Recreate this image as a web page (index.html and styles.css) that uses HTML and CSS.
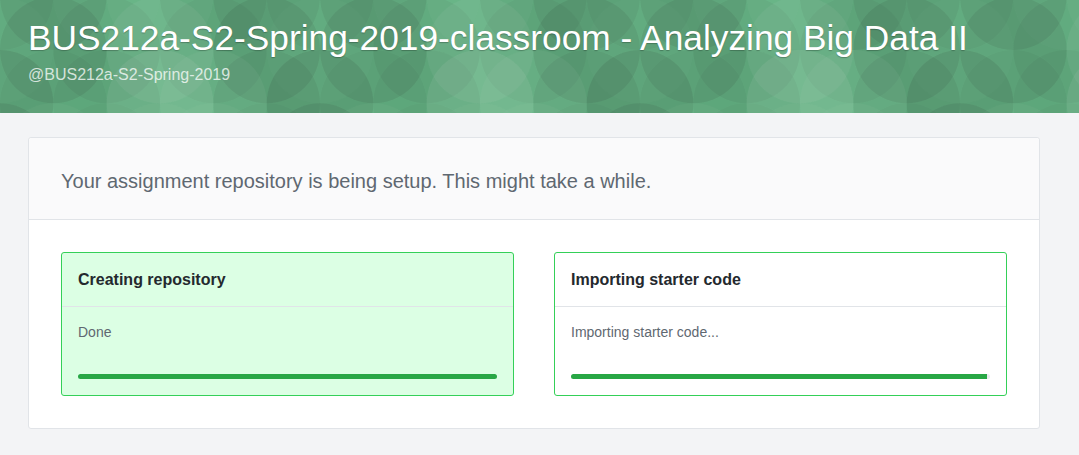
FILE: index.html
```html
<!DOCTYPE html>
<html lang="en">
<head>
<meta charset="utf-8">
<title>Assignment setup</title>
<link rel="stylesheet" href="styles.css">
</head>
<body>
<header class="banner">
  <h1 class="banner-title">BUS212a-S2-Spring-2019-classroom - Analyzing Big Data II</h1>
  <p class="banner-sub">@BUS212a-S2-Spring-2019</p>
</header>
<main class="page">
  <section class="box">
    <div class="box-head">Your assignment repository is being setup. This might take a while.</div>
    <div class="box-body">
      <article class="step step-done">
        <h2 class="step-title">Creating repository</h2>
        <div class="step-body">
          <p class="step-text">Done</p>
          <div class="bar"><div class="bar-fill bar-full"></div></div>
        </div>
      </article>
      <article class="step">
        <h2 class="step-title">Importing starter code</h2>
        <div class="step-body">
          <p class="step-text">Importing starter code...</p>
          <div class="bar"><div class="bar-fill bar-most"></div></div>
        </div>
      </article>
    </div>
  </section>
</main>
</body>
</html>
```
FILE: styles.css
```css
* { box-sizing: border-box; }
html, body { margin: 0; padding: 0; }
body {
  background: #f3f4f6;
  font-family: "Liberation Sans", Arial, sans-serif;
  color: #24292e;
  height: 455px;
  overflow: hidden;
}
.banner {
  height: 113px;
  padding: 15px 28px 0;
  background-color: #63b383;
  background-size: 320px 320px;
  background-image: url("data:image/svg+xml,%3Csvg xmlns='http://www.w3.org/2000/svg' width='320' height='320'%3E%3Cg fill='%23222'%3E%3Ccircle cx='53.33' cy='-3.33' r='53.33' fill-opacity='.09'/%3E%3Ccircle cx='373.33' cy='-3.33' r='53.33' fill-opacity='.09'/%3E%3Ccircle cx='266.67' cy='-3.33' r='53.33' fill-opacity='.08'/%3E%3Ccircle cx='-53.33' cy='-3.33' r='53.33' fill-opacity='.08'/%3E%3Ccircle cx='213.33' cy='-3.33' r='53.33' fill-opacity='.06'/%3E%3Ccircle cx='0' cy='-3.33' r='53.33' fill-opacity='.05'/%3E%3Ccircle cx='320' cy='-3.33' r='53.33' fill-opacity='.05'/%3E%3Ccircle cx='106.67' cy='50' r='53.33' fill-opacity='.06'/%3E%3Ccircle cx='53.33' cy='50' r='53.33' fill-opacity='.09'/%3E%3Ccircle cx='373.33' cy='50' r='53.33' fill-opacity='.09'/%3E%3Ccircle cx='213.33' cy='50' r='53.33' fill-opacity='.05'/%3E%3Ccircle cx='266.67' cy='50' r='53.33' fill-opacity='.09'/%3E%3Ccircle cx='-53.33' cy='50' r='53.33' fill-opacity='.09'/%3E%3Ccircle cx='0' cy='103.33' r='53.33' fill-opacity='.1'/%3E%3Ccircle cx='320' cy='103.33' r='53.33' fill-opacity='.1'/%3E%3Ccircle cx='53.33' cy='103.33' r='53.33' fill-opacity='.04'/%3E%3Ccircle cx='373.33' cy='103.33' r='53.33' fill-opacity='.04'/%3E%3Ccircle cx='106.67' cy='103.33' r='53.33' fill-opacity='.05'/%3E%3Ccircle cx='266.67' cy='103.33' r='53.33' fill-opacity='.07'/%3E%3Ccircle cx='-53.33' cy='103.33' r='53.33' fill-opacity='.07'/%3E%3Ccircle cx='0' cy='156.67' r='53.33' fill-opacity='.09'/%3E%3Ccircle cx='320' cy='156.67' r='53.33' fill-opacity='.09'/%3E%3Ccircle cx='106.67' cy='156.67' r='53.33' fill-opacity='.03'/%3E%3Ccircle cx='266.67' cy='156.67' r='53.33' fill-opacity='.03'/%3E%3Ccircle cx='-53.33' cy='156.67' r='53.33' fill-opacity='.03'/%3E%3C/g%3E%3Cg fill='%23ddd'%3E%3Ccircle cx='106.67' cy='-3.33' r='53.33' fill-opacity='.02'/%3E%3Ccircle cx='160' cy='-3.33' r='53.33' fill-opacity='.03'/%3E%3Ccircle cx='0' cy='50' r='53.33' fill-opacity='.02'/%3E%3Ccircle cx='320' cy='50' r='53.33' fill-opacity='.02'/%3E%3Ccircle cx='160' cy='50' r='53.33' fill-opacity='.07'/%3E%3Ccircle cx='160' cy='103.33' r='53.33' fill-opacity='.09'/%3E%3Ccircle cx='213.33' cy='103.33' r='53.33' fill-opacity='.05'/%3E%3Ccircle cx='53.33' cy='156.67' r='53.33' fill-opacity='.03'/%3E%3Ccircle cx='373.33' cy='156.67' r='53.33' fill-opacity='.03'/%3E%3Ccircle cx='160' cy='156.67' r='53.33' fill-opacity='.03'/%3E%3Ccircle cx='213.33' cy='156.67' r='53.33' fill-opacity='.03'/%3E%3C/g%3E%3C/svg%3E");
}
.banner-title {
  margin: 0;
  font-size: 35.3px;
  font-weight: 400;
  line-height: 45px;
  color: #fff;
  text-shadow: 0 1px 1px rgba(0, 0, 0, 0.25);
}
.banner-sub {
  margin: 4px 0 0;
  font-size: 16px;
  line-height: 21px;
  color: rgba(255, 255, 255, 0.75);
}
.page { padding: 24px 39px 0 28px; }
.box {
  background: #fff;
  border: 1px solid #e1e4e8;
  border-radius: 3px;
}
.box-head {
  padding: 30px 32px 24px;
  font-size: 20px;
  line-height: 27px;
  color: #5f6871;
  background: #fafafb;
  border-bottom: 1px solid #e1e4e8;
  border-radius: 3px 3px 0 0;
}
.box-body {
  display: grid;
  grid-template-columns: 1fr 1fr;
  gap: 40px;
  padding: 32px;
}
.step {
  border: 1px solid #34d058;
  border-radius: 3px;
  background: #fff;
}
.step-done { background: #dcffe4; }
.step-title {
  margin: 0;
  padding: 16px;
  font-size: 16px;
  font-weight: 700;
  line-height: 21px;
  color: #24292e;
  border-bottom: 1px solid #e1e4e8;
}
.step-body { padding: 15px 16px 16px; }
.step-text {
  margin: 0 0 31px;
  font-size: 14px;
  line-height: 21px;
  color: #5f6871;
}
.bar {
  height: 5px;
  background: #eaecef;
  border-radius: 3px;
  overflow: hidden;
}
.bar-fill { height: 100%; background: #28a745; }
.bar-full { width: 100%; }
.bar-most { width: 99.3%; }
```
